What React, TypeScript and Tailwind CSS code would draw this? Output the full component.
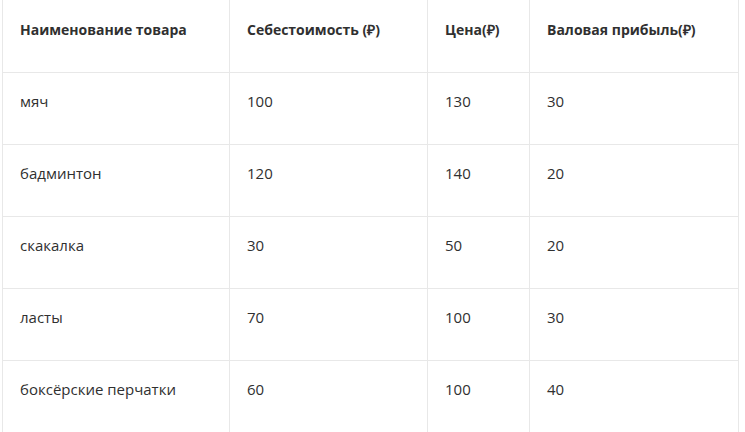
import React from "react";

const headers = ["Наименование товара", "Себестоимость (₽)", "Цена(₽)", "Валовая прибыль(₽)"];

const rows: [string, number, number, number][] = [
  ["мяч", 100, 130, 30],
  ["бадминтон", 120, 140, 20],
  ["скакалка", 30, 50, 20],
  ["ласты", 70, 100, 30],
  ["боксёрские перчатки", 60, 100, 40],
];

const widths = ["w-[227px]", "w-[198px]", "w-[102px]", "w-[209px]"];

export default function App() {
  return (
    <div className="bg-white min-h-screen pl-[2px] font-['Open_Sans',sans-serif] text-[#303030]">
      <table className="border-collapse table-fixed w-[736px]">
        <thead>
          <tr className="h-[72px]">
            {headers.map((h, i) => (
              <th
                key={h}
                className={`${widths[i]} border border-[#e8e8e8] border-t-0 align-top text-left pl-[17px] pt-[19px] text-[14px] font-bold leading-[22px]`}
              >
                {h}
              </th>
            ))}
          </tr>
        </thead>
        <tbody>
          {rows.map((r) => (
            <tr key={r[0]} className="h-[72px]">
              {r.map((c, i) => (
                <td
                  key={i}
                  className="border border-[#e8e8e8] align-top pl-[17px] pt-[17px] text-[15px] leading-[22px]"
                >
                  {c}
                </td>
              ))}
            </tr>
          ))}
        </tbody>
      </table>
    </div>
  );
}
